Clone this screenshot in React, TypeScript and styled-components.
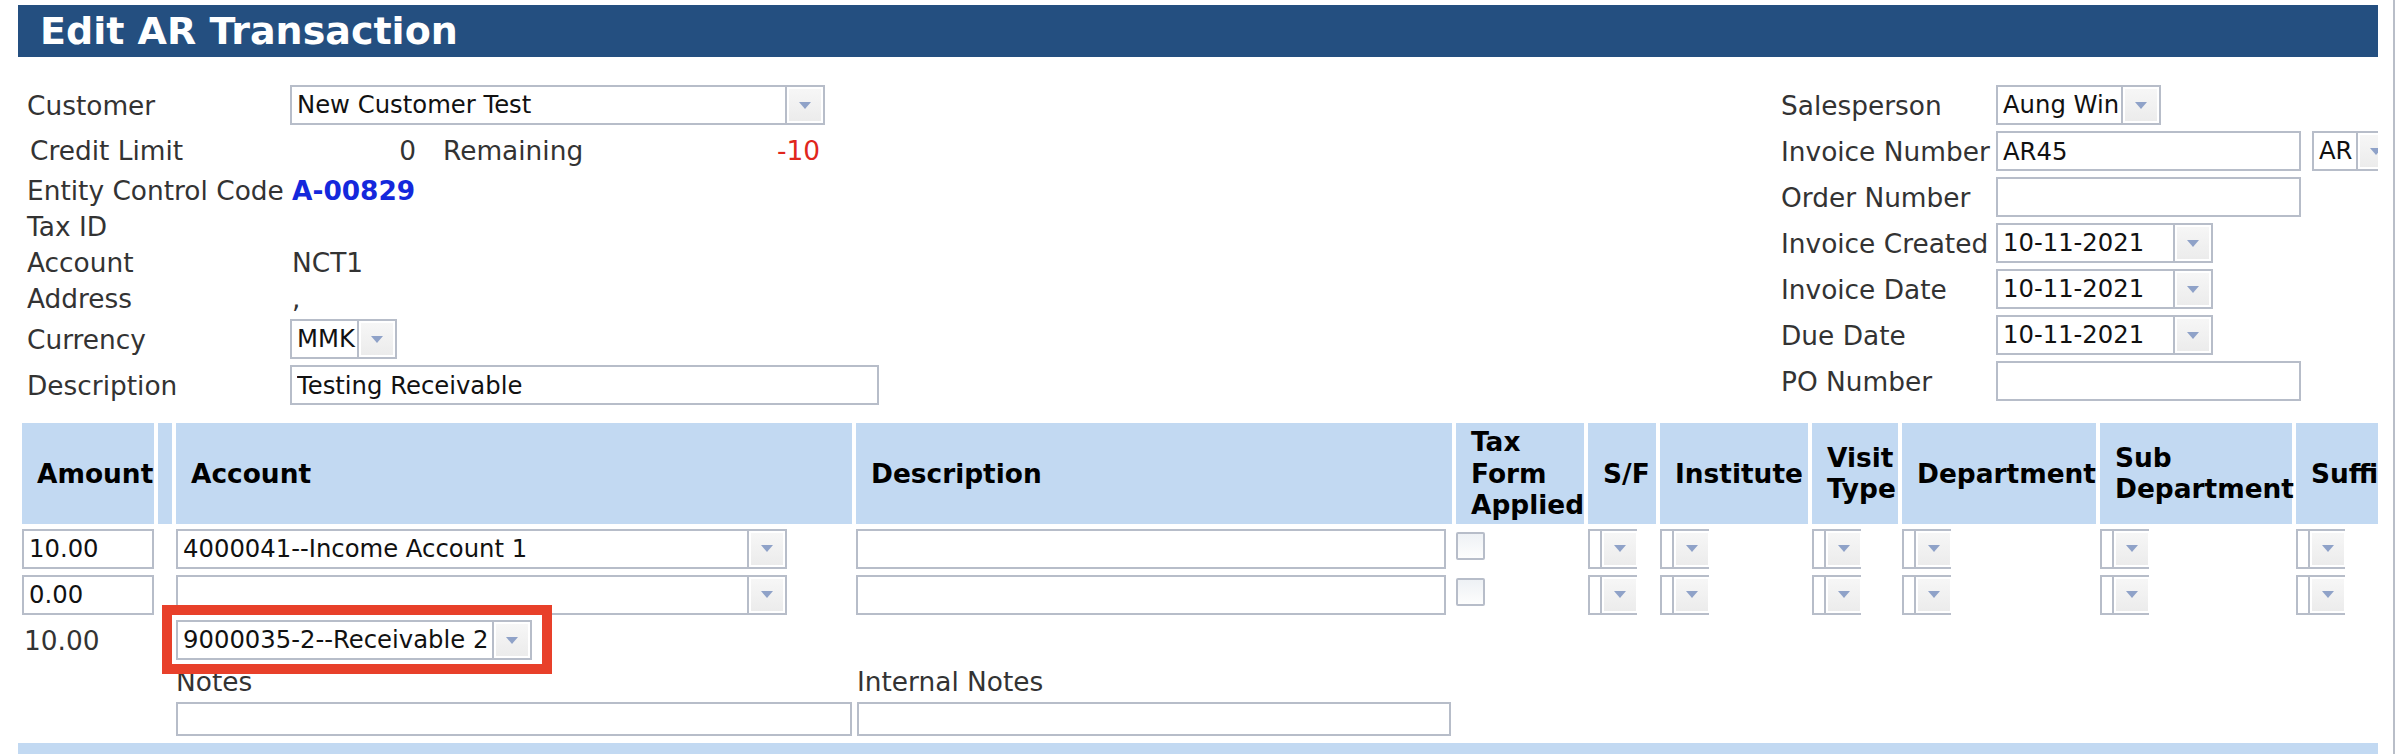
import React from "react";
import styled, { createGlobalStyle } from "styled-components";

const FONT = `"DejaVu Sans", Verdana, sans-serif`;
const BORDER = "#b7bdc9";
const HEAD_BLUE = "#c2d9f2";
const FIELD_SIZE = "24.3px";

const GlobalStyle = createGlobalStyle`
  html, body {
    margin: 0;
    background: #fff;
    overflow: hidden;
  }
  body {
    font-family: ${FONT};
    font-size: 26.4px;
    color: #333;
  }
`;

const Frame = styled.div`
  width: 2395px;
  height: 754px;
  box-sizing: border-box;
  padding: 5px 0 0 18px;
  border-right: 2px solid #b9bec8;
  overflow: hidden;
`;

const Content = styled.div`
  width: 2360px;
  overflow: hidden;
`;

const TitleBar = styled.h1`
  margin: 0;
  height: 52px;
  padding-left: 22px;
  background: #244f80;
  color: #fff;
  font-size: 38px;
  font-weight: bold;
  line-height: 52px;
  white-space: nowrap;
`;

const FormArea = styled.div`
  display: grid;
  grid-template-columns: 1754px 1fr;
  padding-left: 9px;
  margin-top: 25px;
`;

const Column = styled.div`
  display: flex;
  flex-direction: column;
`;

const FieldRow = styled.div<{ $h: number; $indent?: number }>`
  display: flex;
  align-items: center;
  height: ${(p) => p.$h}px;
  padding-left: ${(p) => p.$indent ?? 0}px;
  white-space: nowrap;
`;

const Label = styled.div<{ $w: number }>`
  flex: none;
  width: ${(p) => p.$w}px;
  white-space: nowrap;
`;

const Value = styled.div<{ $bold?: boolean; $color?: string }>`
  padding-left: 2px;
  font-weight: ${(p) => (p.$bold ? "bold" : "normal")};
  color: ${(p) => p.$color ?? "#333"};
`;

const NumberCell = styled.div<{ $w: number; $color?: string }>`
  flex: none;
  width: ${(p) => p.$w}px;
  text-align: right;
  color: ${(p) => p.$color ?? "#333"};
`;

const Remaining = styled.div`
  display: flex;
  justify-content: space-between;
  width: 377px;
  margin-left: 27px;
`;

const Gap = styled.span<{ $w: number }>`
  flex: none;
  width: ${(p) => p.$w}px;
`;

const TextInput = styled.input<{ $w?: number; $h?: number }>`
  display: block;
  flex: none;
  width: ${(p) => (p.$w ? `${p.$w}px` : "100%")};
  height: ${(p) => p.$h ?? 40}px;
  box-sizing: border-box;
  margin: 0;
  padding: 0 5px;
  border: 2px solid ${BORDER};
  border-radius: 0;
  outline: none;
  background: #fff;
  font-family: ${FONT};
  font-size: ${FIELD_SIZE};
  color: #111;
`;

const SelectBox = styled.div<{ $w: number }>`
  display: flex;
  flex: none;
  width: ${(p) => p.$w}px;
  height: 40px;
  box-sizing: border-box;
  border: 2px solid ${BORDER};
  background: #fff;
`;

const SelectText = styled.span`
  flex: 1;
  min-width: 0;
  padding: 0 5px;
  font-size: ${FIELD_SIZE};
  line-height: 36px;
  overflow: hidden;
  white-space: nowrap;
  color: #111;
`;

const SelectButton = styled.span`
  flex: none;
  width: 38px;
  box-sizing: border-box;
  border-left: 2px solid ${BORDER};
  display: flex;
  align-items: center;
  justify-content: center;
  background: linear-gradient(#f7f7f7, #ebebeb);
  box-shadow: inset 0 0 0 2px #fff;

  &::after {
    content: "";
    width: 0;
    height: 0;
    border-left: 6px solid transparent;
    border-right: 6px solid transparent;
    border-top: 7px solid #8fa2c8;
  }
`;

const Select: React.FC<{ w: number; value?: string }> = ({ w, value }) => (
  <SelectBox $w={w}>
    <SelectText>{value}</SelectText>
    <SelectButton />
  </SelectBox>
);

const Table = styled.table`
  border-collapse: separate;
  border-spacing: 4px;
  table-layout: fixed;
  width: 2410px;
  margin-top: 11px;
`;

const HeadCell = styled.th<{ $bare?: boolean }>`
  padding: ${(p) => (p.$bare ? "0" : "3px 2px 3px 15px")};
  background: ${HEAD_BLUE};
  color: #000;
  font-weight: bold;
  line-height: 31.5px;
  text-align: left;
  vertical-align: middle;
  height: 94px;
`;

const Cell = styled.td`
  padding: 1px 0 0;
  vertical-align: top;
  height: 41px;
`;

const TotalCell = styled.td<{ $pad?: number }>`
  padding: 0 0 0 ${(p) => p.$pad ?? 0}px;
  vertical-align: middle;
  height: 41px;
  color: #333;
`;

const NoteCell = styled.td<{ $pad?: number }>`
  padding: 0 0 0 ${(p) => p.$pad ?? 0}px;
  vertical-align: top;
`;

const NoteLabel = styled.div`
  line-height: 34px;
  margin-bottom: 3px;
  color: #333;
`;

const Checkbox = styled.span`
  display: block;
  width: 29px;
  height: 28px;
  margin-top: 3px;
  box-sizing: border-box;
  border: 2px solid ${BORDER};
  border-radius: 2px;
  background: linear-gradient(#eef1f5, #fdfdfd);
`;

const Highlight = styled.span`
  position: relative;
  display: inline-block;
  vertical-align: top;

  &::before {
    content: "";
    position: absolute;
    left: -14px;
    top: -15px;
    width: 390px;
    height: 69px;
    box-sizing: border-box;
    border: 10px solid #e8402a;
    pointer-events: none;
  }
`;

const BottomBar = styled.div`
  height: 30px;
  margin-top: 3px;
  background: ${HEAD_BLUE};
`;

const columns = [132, 14, 676, 596, 128, 68, 148, 86, 194, 192, 130];
const smallSelects = ["sf", "institute", "visit", "department", "sub", "suffix"];

const LineRow: React.FC<{ amount: string; account?: string }> = ({ amount, account }) => (
  <tr>
    <Cell>
      <TextInput defaultValue={amount} readOnly />
    </Cell>
    <Cell />
    <Cell>
      <Select w={611} value={account} />
    </Cell>
    <Cell>
      <TextInput $w={590} readOnly />
    </Cell>
    <Cell>
      <Checkbox />
    </Cell>
    {smallSelects.map((k) => (
      <Cell key={k}>
        <Select w={49} />
      </Cell>
    ))}
  </tr>
);

export default function App() {
  return (
    <>
      <GlobalStyle />
      <Frame>
        <Content>
          <TitleBar>Edit AR Transaction</TitleBar>

          <FormArea>
            <Column>
              <FieldRow $h={46}>
                <Label $w={263}>Customer</Label>
                <Select w={535} value="New Customer Test" />
              </FieldRow>
              <FieldRow $h={44} $indent={3}>
                <Label $w={260}>Credit Limit</Label>
                <NumberCell $w={126}>0</NumberCell>
                <Remaining>
                  <span>Remaining</span>
                  <NumberCell $w={60} $color="#e0261c">
                    -10
                  </NumberCell>
                </Remaining>
              </FieldRow>
              <FieldRow $h={36}>
                <Label $w={263}>Entity Control Code</Label>
                <Value $bold $color="#1428dc">
                  A-00829
                </Value>
              </FieldRow>
              <FieldRow $h={36}>
                <Label $w={263}>Tax ID</Label>
              </FieldRow>
              <FieldRow $h={36}>
                <Label $w={263}>Account</Label>
                <Value>NCT1</Value>
              </FieldRow>
              <FieldRow $h={36}>
                <Label $w={263}>Address</Label>
                <Value>,</Value>
              </FieldRow>
              <FieldRow $h={46}>
                <Label $w={263}>Currency</Label>
                <Select w={107} value="MMK" />
              </FieldRow>
              <FieldRow $h={46}>
                <Label $w={263}>Description</Label>
                <TextInput $w={589} defaultValue="Testing Receivable" readOnly />
              </FieldRow>
            </Column>

            <Column>
              <FieldRow $h={46}>
                <Label $w={215}>Salesperson</Label>
                <Select w={165} value="Aung Win" />
              </FieldRow>
              <FieldRow $h={46}>
                <Label $w={215}>Invoice Number</Label>
                <TextInput $w={305} defaultValue="AR45" readOnly />
                <Gap $w={11} />
                <Select w={84} value="AR" />
              </FieldRow>
              <FieldRow $h={46}>
                <Label $w={215}>Order Number</Label>
                <TextInput $w={305} readOnly />
              </FieldRow>
              <FieldRow $h={46}>
                <Label $w={215}>Invoice Created</Label>
                <Select w={217} value="10-11-2021" />
              </FieldRow>
              <FieldRow $h={46}>
                <Label $w={215}>Invoice Date</Label>
                <Select w={217} value="10-11-2021" />
              </FieldRow>
              <FieldRow $h={46}>
                <Label $w={215}>Due Date</Label>
                <Select w={217} value="10-11-2021" />
              </FieldRow>
              <FieldRow $h={46}>
                <Label $w={215}>PO Number</Label>
                <TextInput $w={305} readOnly />
              </FieldRow>
            </Column>
          </FormArea>

          <Table>
            <colgroup>
              {columns.map((w, i) => (
                <col key={i} style={{ width: w }} />
              ))}
            </colgroup>
            <thead>
              <tr>
                <HeadCell>Amount</HeadCell>
                <HeadCell $bare />
                <HeadCell>Account</HeadCell>
                <HeadCell>Description</HeadCell>
                <HeadCell>Tax Form Applied</HeadCell>
                <HeadCell>S/F</HeadCell>
                <HeadCell>Institute</HeadCell>
                <HeadCell>Visit Type</HeadCell>
                <HeadCell>Department</HeadCell>
                <HeadCell>Sub Department</HeadCell>
                <HeadCell>Suffix</HeadCell>
              </tr>
            </thead>
            <tbody>
              <LineRow amount="10.00" account="4000041--Income Account 1" />
              <LineRow amount="0.00" />
              <tr>
                <TotalCell $pad={2}>10.00</TotalCell>
                <TotalCell />
                <TotalCell>
                  <Highlight>
                    <Select w={356} value="9000035-2--Receivable 2" />
                  </Highlight>
                </TotalCell>
                <TotalCell colSpan={8} />
              </tr>
              <tr>
                <NoteCell />
                <NoteCell />
                <NoteCell>
                  <NoteLabel>Notes</NoteLabel>
                  <TextInput $h={34} readOnly />
                </NoteCell>
                <NoteCell $pad={1}>
                  <NoteLabel>Internal Notes</NoteLabel>
                  <TextInput $w={594} $h={34} readOnly />
                </NoteCell>
                <NoteCell colSpan={7} />
              </tr>
            </tbody>
          </Table>

          <BottomBar />
        </Content>
      </Frame>
    </>
  );
}
